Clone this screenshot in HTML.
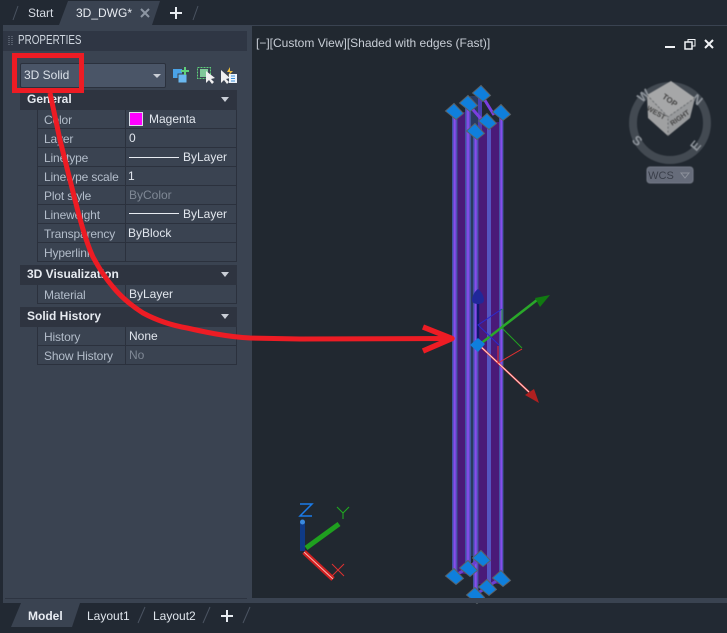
<!DOCTYPE html>
<html><head><meta charset="utf-8"><style>
html,body{margin:0;padding:0}
body{width:727px;height:633px;position:relative;overflow:hidden;background:#222933;font-family:"Liberation Sans",sans-serif;font-size:12px;color:#dfe5ec}
.a{position:absolute;white-space:nowrap}
.l{position:absolute;left:44px;color:#b3bdca;white-space:nowrap;line-height:18px;letter-spacing:-.15px}
.v{position:absolute;left:129px;color:#e2e7ee;white-space:nowrap;line-height:18px}
.h{position:absolute;left:20px;width:217px;height:20px;background:#2e3440;font-weight:bold;color:#e6eaf0;line-height:19px}
.h span{position:absolute;left:7px}
.h i{position:absolute;left:201px;top:7px;border:4.5px solid transparent;border-top:5px solid #c9ced6;border-bottom:0}
.r{position:absolute;left:37px;width:198px;height:18px;border-bottom:1px solid #2b313d;border-left:1px solid #2b313d;border-right:1px solid #2b313d;box-sizing:content-box}
.r:after{content:"";position:absolute;left:87px;top:0;bottom:0;width:1px;background:#2b313d}
.ln{position:absolute;left:129px;width:50px;height:1px;background:#e8ecf2}
</style></head><body>
<div class="a" style="left:3px;top:25px;width:724px;height:578px;background:#3a4351"></div>
<div class="a" style="left:3px;top:31px;width:244px;height:20px;background:#2f3644"></div>
<div class="a" style="left:252px;top:26px;width:475px;height:572px;background:#212830"></div>
<div class="a" style="left:5px;top:598px;width:242px;height:1px;background:#2d3441"></div>

<!-- top tabs -->
<svg class="a" style="left:0;top:0" width="220" height="26"><path d="M68 1H160L152 25H59Z" fill="#3a4351"/><path d="M18 6L13 20M198 6L193 20" stroke="#4a5361" fill="none"/><path d="M141 9L149 17M149 9L141 17" stroke="#8c95a2" stroke-width="2"/><path d="M176 7V19M170 13H182" stroke="#e8ecf2" stroke-width="2"/></svg>
<div class="a" style="left:28px;top:6px;color:#d8dde5">Start</div>
<div class="a" style="left:76px;top:6px;color:#e8ecf2">3D_DWG*</div>

<!-- panel title -->
<div class="a" style="left:18px;top:32px;font-size:13px;color:#cfd6df;transform:scaleX(.76);transform-origin:0 0">PROPERTIES</div>
<svg class="a" style="left:8px;top:36px" width="6" height="10"><path d="M1 0V10M4 0V10" stroke="#7d8693" stroke-dasharray="1 1" fill="none"/></svg>

<!-- dropdown -->
<div class="a" style="left:20px;top:63px;width:144px;height:23px;background:#4a5567;border:1px solid #2b313d;border-radius:2px;line-height:23px;color:#dbe1e9"><span style="position:absolute;left:3px">3D Solid</span><i style="position:absolute;left:132px;top:10px;border:4px solid transparent;border-top:4px solid #c9ced6;border-bottom:0"></i></div>
<svg class="a" style="left:0;top:0" width="250" height="100">
<rect x="173" y="69" width="9" height="9" fill="#4aa3e8"/><rect x="178" y="74" width="9" height="9" fill="#6ab8f0" stroke="#3a4351"/><path d="M185 67V75M181 71H189" stroke="#5fd07a" stroke-width="2"/>
<rect x="197.500" y="67.500" width="13" height="11" fill="none" stroke="#5fd07a" stroke-dasharray="2 1"/><rect x="200" y="69" width="8" height="8" fill="#80c89a"/><path d="M206 71L206 83L209 80L212 84L214 82L211 79L215 78Z" fill="#f0f0f0"/>
<path d="M221 70L221 83L224 80L227 84L229 82L226 79L230 78Z" fill="#f0f0f0"/><path d="M230 67L227 72L230 72L228 76L233 71L230 71Z" fill="#f0c040"/><rect x="229" y="74" width="8" height="9" fill="#eef4fa"/><path d="M231 76H235M231 78.500H235M231 81H235" stroke="#3a8fd8"/>
</svg>

<!-- General -->
<div class="h" style="top:90px"><span>General</span><i></i></div>
<div class="r" style="top:110px"></div><div class="r" style="top:129px"></div><div class="r" style="top:148px"></div><div class="r" style="top:167px"></div><div class="r" style="top:186px"></div><div class="r" style="top:205px"></div><div class="r" style="top:224px"></div><div class="r" style="top:243px"></div>
<div class="l" style="top:111px">Color</div><div class="l" style="top:130px">Layer</div><div class="l" style="top:149px">Linetype</div><div class="l" style="top:168px">Linetype scale</div><div class="l" style="top:187px">Plot style</div><div class="l" style="top:206px">Lineweight</div><div class="l" style="top:225px">Transparency</div><div class="l" style="top:244px">Hyperlink</div>
<div class="a" style="left:129px;top:112px;width:12px;height:12px;background:#ff00ff;border:1px solid #d8dde5"></div>
<div class="v" style="left:149px;top:110px">Magenta</div>
<div class="v" style="top:129px">0</div>
<div class="ln" style="top:157px"></div><div class="v" style="left:183px;top:148px">ByLayer</div>
<div class="v" style="left:128px;top:167px">1</div>
<div class="v" style="top:186px;color:#7f8895">ByColor</div>
<div class="ln" style="top:213px"></div><div class="v" style="left:183px;top:205px">ByLayer</div>
<div class="v" style="left:128px;top:224px">ByBlock</div>

<div class="h" style="top:265px"><span>3D Visualization</span><i></i></div>
<div class="r" style="top:285px"></div>
<div class="l" style="top:286px">Material</div><div class="v" style="top:285px">ByLayer</div>

<div class="h" style="top:307px"><span>Solid History</span><i></i></div>
<div class="r" style="top:327px"></div><div class="r" style="top:346px"></div>
<div class="l" style="top:328px">History</div><div class="l" style="top:347px">Show History</div>
<div class="v" style="top:327px">None</div><div class="v" style="top:346px;color:#7f8895">No</div>

<!-- viewport label -->
<div class="a" style="left:256px;top:36px;color:#c8ced6">[−][Custom View][Shaded with edges (Fast)]</div>

<!-- main drawing -->
<svg class="a" style="left:0;top:0" width="727" height="633">
<defs>
<linearGradient id="g" x1="0" x2="1" y1="0" y2="0"><stop offset="0" stop-color="#2f5a8c"/><stop offset=".3" stop-color="#6a48d0"/><stop offset=".5" stop-color="#9050f5"/><stop offset=".7" stop-color="#6a48d0"/><stop offset="1" stop-color="#2f5a8c"/></linearGradient>
<path id="d" d="M-8.500 0L0 -7.500L9.500 2.500L2 8.500Z" fill="#0f7fdc" stroke="#5a6268"/>
</defs>
<!-- structure -->
<rect x="455" y="112" width="15" height="462" fill="#4a1a78"/>
<rect x="470" y="96" width="11" height="460" fill="#2a3a60"/>
<rect x="478" y="122" width="24" height="462" fill="#4a1a78"/>
<rect x="452" y="112" width="5.500" height="464" fill="url(#g)"/>
<rect x="465" y="104" width="6" height="464" fill="url(#g)"/>
<rect x="473" y="131" width="5.500" height="462" fill="url(#g)"/>
<rect x="478" y="96" width="4" height="40" fill="#4a3fb0"/>
<rect x="487" y="122" width="4" height="464" fill="#5555c0"/>
<rect x="499" y="112" width="4.500" height="466" fill="url(#g)"/>
<path d="M468 104L482 120M481 94L494 115" stroke="#7a3fe0" stroke-width="3" fill="none"/>
<path d="M454 576L468 568M468 568L481 558M475 595L487 587L501 578" stroke="#6a3fd0" stroke-width="3" fill="none"/>
<use href="#d" x="454" y="111"/><use href="#d" x="468" y="103"/><use href="#d" x="481" y="93"/><use href="#d" x="475" y="131"/><use href="#d" x="487" y="121"/><use href="#d" x="501" y="112"/>
<use href="#d" x="454" y="576"/><use href="#d" x="468" y="568"/><use href="#d" x="481" y="558"/><use href="#d" x="487" y="587"/><use href="#d" x="501" y="578"/><use href="#d" x="475" y="595"/>
<rect x="252" y="598" width="475" height="5" fill="#3a4351"/>
<!-- gizmo -->
<path d="M478 300V344" stroke="#10186e" stroke-width="2.500"/>
<path d="M478 289C481 291 484 296 484 300C484 303 481 304 478 304C475 304 472 303 472 300C472 296 475 291 478 289Z" fill="#20289a"/>
<path d="M479 345L537 300" stroke="#2aa82a" stroke-width="2.500"/>
<path d="M550 295L535 298L540 307Z" fill="#117a11"/>
<path d="M479 345L529 392" stroke="#e03030" stroke-width="2"/><path d="M479 345L529 392" stroke="#ffd8d8" stroke-width="1"/>
<path d="M539 403L534 389L525 395Z" fill="#b02020"/>
<path d="M499 345L478 325L502 309" stroke="#2a2ad0" fill="none"/>
<path d="M502 309V328L522 348" stroke="#22a022" fill="none"/>
<path d="M498 346V363L522 349" stroke="#e83030" fill="none"/>
<path d="M470 345L478 338L485 344L478 352Z" fill="#0f7fdc"/>
<!-- UCS -->
<path d="M302.500 522V551" stroke="#0f3a86" stroke-width="5"/>
<circle cx="302.500" cy="522" r="2.500" fill="#3a8ae0"/>
<path d="M306 548L339 524" stroke="#1fa01f" stroke-width="5"/>
<path d="M304 552L333 579" stroke="#d02020" stroke-width="5"/><path d="M304 552L333 579" stroke="#ffb0b0" stroke-width="1"/>
<path d="M300 504H312L300 516H312" stroke="#1a7be8" fill="none" stroke-width="1.500"/>
<path d="M337 507L343 513L349 507M343 513V519" stroke="#1fb01f" fill="none"/>
<path d="M332 564L344 576M344 564L332 576" stroke="#e03030" fill="none"/>
<!-- red annotation -->
<rect x="14.500" y="55.500" width="67" height="35" fill="none" stroke="#ed1c24" stroke-width="5"/>
<path d="M50 93L60 140L72 188C78 212 85 240 93 257C100 270 106 279 113 287C122 298 132 306 143 313C156 320 170 325 187 328C205 332 228 337 250 338L300 339L450 338.500" fill="none" stroke="#ed1c24" stroke-width="5"/>
<path d="M423 327L452 338.500L423 351" fill="none" stroke="#ed1c24" stroke-width="5.500" stroke-linejoin="round"/>
<!-- window controls -->
<path d="M665 47H675" stroke="#f0f2f5" stroke-width="2"/>
<rect x="685" y="42" width="7" height="7" fill="none" stroke="#f0f2f5" stroke-width="1.500"/><path d="M688 42V39.500H695V46H692" fill="none" stroke="#f0f2f5"/>
<path d="M705 40L713 48M713 40L705 48" stroke="#f0f2f5" stroke-width="2"/>
<!-- viewcube -->
<g style="filter:blur(.4px)">
<circle cx="670" cy="123" r="37" fill="none" stroke="#434a52" stroke-width="8"/>
<g font-family="Liberation Sans" font-size="13" font-weight="bold" fill="#8d939a" text-anchor="middle">
<text x="697" y="104" transform="rotate(40 697 100)">N</text>
<text x="696" y="150" transform="rotate(-50 696 146)">E</text>
<text x="637" y="145" transform="rotate(40 637 141)">S</text>
<text x="644" y="100" transform="rotate(-40 644 96)">W</text></g>
<path d="M671 81L695 98L668 117L647 95Z" fill="#a6a7a8"/>
<path d="M647 95L668 117L668 136L648 118Z" fill="#a0a1a2"/>
<path d="M695 98L690 118L668 136L668 117Z" fill="#989a9c"/>
<path d="M647 95L668 117L668 136M695 98L668 117" stroke="#6a6d70" fill="none" stroke-dasharray="2 2"/>
<text x="670" y="103" font-size="8" fill="#454545" font-weight="bold" text-anchor="middle" font-family="Liberation Sans" transform="rotate(35 670 100)">TOP</text>
<text x="656" y="115" font-size="7" fill="#454545" font-weight="bold" text-anchor="middle" font-family="Liberation Sans" transform="rotate(30 656 113)">WEST</text>
<text x="680" y="120" font-size="7" fill="#454545" font-weight="bold" text-anchor="middle" font-family="Liberation Sans" transform="rotate(-35 680 118)">RIGHT</text>
<rect x="647" y="167" width="46" height="16" rx="3" fill="#666c7a" stroke="#767c88"/>
</g>
<text x="661" y="179" font-size="11" fill="#3a3f4a" text-anchor="middle" font-family="Liberation Sans">WCS</text>
<path d="M681 173L689 173L685 178Z" fill="none" stroke="#8d929c"/>
<!-- bottom tabs -->
<path d="M21 603H80L72 627H11Z" fill="#3a4351"/>
<path d="M145 607L138 623M210 607L203 623M250 607L243 623" stroke="#4a5361" fill="none"/>
<path d="M227 610V622M221 616H233" stroke="#e8ecf2" stroke-width="2"/>
</svg>
<div class="a" style="left:28px;top:609px;font-weight:bold;color:#e8ecf2">Model</div>
<div class="a" style="left:87px;top:609px;color:#dfe5ec">Layout1</div>
<div class="a" style="left:153px;top:609px;color:#dfe5ec">Layout2</div>
</body></html>
